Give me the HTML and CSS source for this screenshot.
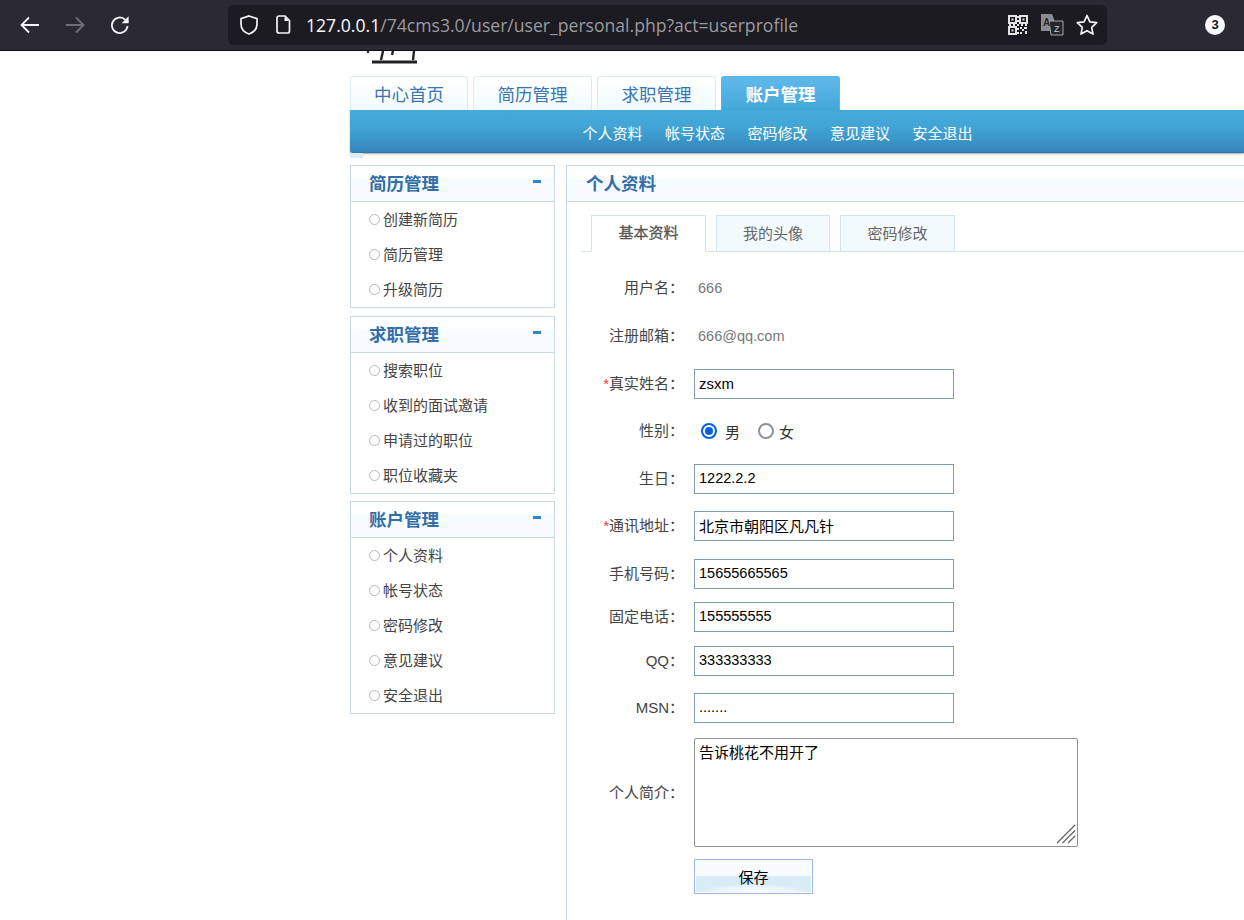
FILE: index.html
```html
<!DOCTYPE html>
<html lang="zh-CN">
<head>
    <meta charset="UTF-8">
    <title>个人资料</title>
    <link rel="stylesheet" href="styles.css">
</head>
<body>
    <div class="toolbar">
        <svg class="nav-icon" width="24" height="24" viewBox="0 0 24 24"><path d="M21 12H4M11 4.5 3.5 12l7.5 7.5" fill="none" stroke="#f4f4f6" stroke-width="1.8"/></svg>
        <svg class="nav-icon off" width="24" height="24" viewBox="0 0 24 24"><path d="M3 12h17M13 4.5l7.5 7.5-7.5 7.5" fill="none" stroke="#6f6e76" stroke-width="1.8"/></svg>
        <svg class="nav-icon" width="24" height="24" viewBox="0 0 24 24"><path d="M19.5 13a7.8 7.8 0 1 1-2.3-6.3L20 9" fill="none" stroke="#f4f4f6" stroke-width="1.8"/><path d="M20.6 3.2v7h-7z" fill="#f4f4f6"/></svg>
        <div class="urlbar">
            <svg width="20" height="22" viewBox="0 0 20 22"><path d="M10 2 18 4.6V10c0 5-3.4 8.400-8 10-4.600-1.600-8-5-8-10V4.600z" fill="none" stroke="#f4f4f6" stroke-width="1.700"/></svg>
            <svg class="page-icon" width="16" height="20" viewBox="0 0 16 20"><path d="M2 3a2 2 0 0 1 2-2h6l4.500 4.500V16a2 2 0 0 1-2 2H4a2 2 0 0 1-2-2z" fill="none" stroke="#f4f4f6" stroke-width="1.700"/><path d="M9.500 1.500v4.500h4.500z" fill="#f4f4f6"/></svg>
            <span class="url"><b>127.0.0.1</b>/74cms3.0/user/user_personal.php?act=userprofile</span>
            <svg class="qr" width="20" height="20" viewBox="0 0 20 20">
                <path d="M1 1h7v7H1zM12 1h7v7h-7zM1 12h7v7H1z" fill="none" stroke="#e4e4e4" stroke-width="2"/>
                <path d="M3.500 3.500h2v2h-2zM14.500 3.500h2v2h-2zM3.500 14.500h2v2h-2zM9 1h2v2H9zM9 5h2v2H9zM1 9h2v2H1zM5 9h2v2H5zM9 9h2v2H9zM13 9h2v2h-2zM17 9h2v2h-2zM9 13h2v2H9zM12 12h2v2h-2zM16 12h3v2h-3zM14 14h2v2h-2zM9 17h2v2H9zM12 17h2v2h-2zM17 16h2v3h-2z" fill="#e4e4e4"/>
            </svg>
            <svg class="translate" width="24" height="24" viewBox="0 0 24 24">
                <path d="M1 1h11l2 5v12H1z" fill="#8b8b8f"/>
                <path d="M9 8h14v14H11z" fill="#26252b" stroke="#a5a5a8"/>
                <text x="3" y="13" class="translate-a">A</text>
                <text x="14" y="19" class="translate-z">Z</text>
            </svg>
            <svg width="24" height="24" viewBox="0 0 24 24"><path d="M12 2.500l2.900 6.300 6.800.8-5 4.700 1.300 6.800-6-3.400-6 3.400 1.300-6.800-5-4.700 6.800-.8z" fill="none" stroke="#f4f4f6" stroke-width="1.700" stroke-linejoin="round"/></svg>
        </div>
        <span class="badge">3</span>
    </div>

    <div class="page">
        <div class="logo-row">
            <svg width="70" height="13" viewBox="0 0 70 13"><circle cx="18" cy="1" r="1.300" fill="#333"/><path d="M33 0l-2 9M43 0l-1 4M64 0l-1 9" fill="none" stroke="#222" stroke-width="2.400"/><path d="M22 11h45" fill="none" stroke="#222" stroke-width="3"/></svg>
        </div>

        <div class="nav-tabs">
            <a class="nav-tab">中心首页</a>
            <a class="nav-tab">简历管理</a>
            <a class="nav-tab">求职管理</a>
            <a class="nav-tab active">账户管理</a>
        </div>
        <div class="subnav">
            <a>个人资料</a>
            <a>帐号状态</a>
            <a>密码修改</a>
            <a>意见建议</a>
            <a>安全退出</a>
        </div>
        <div class="subnav-tail"></div>

        <div class="columns">
            <div class="sidebar">
                <div class="side-box">
                    <div class="side-title"><span>简历管理</span><i></i></div>
                    <ul>
                        <li>创建新简历</li>
                        <li>简历管理</li>
                        <li>升级简历</li>
                    </ul>
                </div>
                <div class="side-box">
                    <div class="side-title"><span>求职管理</span><i></i></div>
                    <ul>
                        <li>搜索职位</li>
                        <li>收到的面试邀请</li>
                        <li>申请过的职位</li>
                        <li>职位收藏夹</li>
                    </ul>
                </div>
                <div class="side-box">
                    <div class="side-title"><span>账户管理</span><i></i></div>
                    <ul>
                        <li>个人资料</li>
                        <li>帐号状态</li>
                        <li>密码修改</li>
                        <li>意见建议</li>
                        <li>安全退出</li>
                    </ul>
                </div>
            </div>

            <div class="main">
                <div class="main-title">个人资料</div>
                <div class="tabs">
                    <a class="tab current">基本资料</a>
                    <a class="tab">我的头像</a>
                    <a class="tab">密码修改</a>
                </div>
                <div class="form">
                    <div class="row gap18"><label>用户名：</label><span class="value">666</span></div>
                    <div class="row gap18"><label>注册邮箱：</label><span class="value">666@qq.com</span></div>
                    <div class="row gap17"><label><em>*</em>真实姓名：</label><input type="text" class="wide" value="zsxm"></div>
                    <div class="row gap18"><label>性别：</label>
                        <span class="radio on"></span><span class="radio-text">男</span>
                        <span class="radio"></span><span class="radio-text near">女</span>
                    </div>
                    <div class="row gap17"><label>生日：</label><input type="text" value="1222.2.2"></div>
                    <div class="row gap18"><label><em>*</em>通讯地址：</label><input type="text" class="wide" value="北京市朝阳区凡凡针"></div>
                    <div class="row gap13"><label>手机号码：</label><input type="text" value="15655665565"></div>
                    <div class="row gap14"><label>固定电话：</label><input type="text" value="155555555"></div>
                    <div class="row gap17"><label>QQ：</label><input type="text" value="333333333"></div>
                    <div class="row gap15"><label>MSN：</label><input type="text" value="......."></div>
                    <div class="row area">
                        <label>个人简介：</label>
                        <div class="area-box">
                            <textarea>告诉桃花不用开了</textarea>
                            <svg class="grip" width="20" height="20" viewBox="0 0 20 20"><path d="M1 19 19 1M6.500 19 19 6.500M12 19l7-7" fill="none" stroke="#666" stroke-width="1.300"/></svg>
                        </div>
                    </div>
                    <div class="row save"><button type="button" class="save-btn">保存</button></div>
                </div>
            </div>
        </div>
    </div>
</body>
</html>
```

FILE: styles.css
```css
* {
    margin: 0;
    padding: 0;
    box-sizing: border-box;
}

html, body {
    height: 100%;
    overflow: hidden;
}

body {
    background-color: #fff;
    font-family: "Liberation Sans", "Noto Sans CJK SC", sans-serif;
    font-size: 14px;
    color: #444;
}

/* browser chrome */
.toolbar {
    height: 51px;
    background-color: #2b2a33;
    border-bottom: 1px solid #0c0c0d;
    display: flex;
    align-items: center;
    padding-left: 18px;
}

.nav-icon {
    margin-right: 21px;
    flex: none;
}

.urlbar {
    margin-left: 75px;
    width: 879px;
    height: 40px;
    background-color: #1c1b22;
    border-radius: 6px;
    display: flex;
    align-items: center;
    padding-left: 11px;
    padding-right: 8px;
    margin-top: -1px;
}

.page-icon {
    margin-left: 16px;
}

.url {
    margin-left: 15px;
    margin-top: 1px;
    flex: 1;
    font-family: "Open Sans", "Noto Sans", sans-serif;
    font-size: 17.600px;
    color: #9a9a9f;
    white-space: nowrap;
}

.url b {
    font-weight: normal;
    color: #fbfbfe;
}

.qr {
    margin-right: 12px;
}

.translate {
    margin-right: 11px;
}

.translate-a {
    font-family: "Liberation Sans", sans-serif;
    font-size: 10px;
    font-weight: bold;
    fill: #26252b;
}

.translate-z {
    font-family: "Liberation Sans", sans-serif;
    font-size: 9px;
    fill: #c8c8ca;
}

.badge {
    margin-left: 98px;
    width: 20px;
    height: 20px;
    border-radius: 50%;
    background-color: #fbfbfe;
    color: #15141a;
    font-size: 13px;
    font-weight: bold;
    text-align: center;
    line-height: 20px;
    margin-top: -1px;
}

/* page */
.page {
    margin-left: 350px;
    width: 894px;
    height: 869px;
    display: flex;
    flex-direction: column;
}

.logo-row {
    height: 25px;
    line-height: 0;
}

.nav-tabs {
    display: flex;
    gap: 5px;
    height: 34px;
}

.nav-tab {
    width: 119px;
    height: 34px;
    background: linear-gradient(#ffffff, #f1fbfe);
    border: 1px solid #dcecf4;
    border-bottom: none;
    border-radius: 3px 3px 0 0;
    font-size: 17.500px;
    line-height: 37px;
    text-align: center;
    color: #3a75b0;
}

.nav-tab:first-child {
    width: 118px;
}

.nav-tab.active {
    background: linear-gradient(#5fb9ea, #44a8da);
    border-color: #5cb4e4;
    color: #fff;
    font-weight: bold;
}

.subnav {
    height: 43px;
    background: linear-gradient(#45a9db 0%, #42a5d6 40%, #3486bb 100%);
    border-bottom: 1px solid #2b78ab;
    border-radius: 0 0 0 3px;
    box-shadow: 0 1px 2px rgba(0, 0, 0, 0.35);
    display: flex;
    justify-content: center;
    align-items: center;
    gap: 22.500px;
    padding-right: 39px;
    padding-top: 2px;
    color: #fff;
    font-size: 15px;
}

.subnav-tail {
    width: 13px;
    height: 5px;
    background-color: #dfe9f1;
}

.columns {
    flex: 1;
    display: flex;
    gap: 11px;
    padding-top: 7px;
    min-height: 0;
}

/* left column */
.sidebar {
    width: 205px;
    flex: none;
}

.side-box {
    border: 1px solid #c9d9e8;
    margin-bottom: 8px;
}

.side-box:nth-child(2) {
    margin-bottom: 7px;
}

.side-title {
    height: 36px;
    background: linear-gradient(#ffffff 0%, #fdfeff 36%, #f6fbff 36%, #f7fbff 100%);
    border-bottom: 1px solid #c9d9e8;
    padding: 0 13px 0 18px;
    display: flex;
    align-items: center;
    justify-content: space-between;
    color: #336ea8;
    font-size: 17.500px;
    font-weight: bold;
}

.side-title span {
    margin-top: -2px;
}

.side-title i {
    width: 8px;
    height: 3px;
    margin-top: -5px;
    background-color: #2a87c0;
}

.side-box ul {
    list-style: none;
}

.side-box li {
    height: 35px;
    padding-left: 32px;
    position: relative;
    line-height: 35px;
    color: #444;
    font-size: 15px;
}

.side-box li::before {
    content: "";
    position: absolute;
    left: 18px;
    top: 12px;
    width: 9px;
    height: 9px;
    border-radius: 50%;
    border: 1px solid #b8b8b8;
    background-color: #fff;
}

/* right column */
.main {
    flex: 1;
    border-left: 1px solid #c9d9e8;
    min-width: 0;
}

.main-title {
    height: 37px;
    border-top: 1px solid #c9d9e8;
    border-bottom: 1px solid #c9d9e8;
    background: linear-gradient(#ffffff 0%, #fdfeff 36%, #f6fbff 36%, #f7fbff 100%);
    padding-left: 19px;
    line-height: 37px;
    color: #336ea8;
    font-size: 17.500px;
    font-weight: bold;
}

.tabs {
    display: flex;
    gap: 10px;
    margin: 13px 0 0 14px;
    height: 37px;
    border-bottom: 1px solid #d5e3ee;
}

.tab {
    width: 115px;
    height: 37px;
    background-color: #f3fafe;
    border: 1px solid #cfe3f0;
    text-align: center;
    line-height: 36px;
    color: #666;
    font-size: 15px;
}

.tab:first-child {
    margin-left: 10px;
}

.tab:nth-child(2) {
    width: 114px;
}

.tab.current {
    background-color: #fff;
    border-bottom-color: #fff;
    color: #555;
    line-height: 33px;
    -webkit-text-stroke: 0.3px #555;
}

.form {
    padding-top: 21px;
}

.row {
    display: flex;
    align-items: center;
    height: 30px;
}

.gap13 {
    margin-bottom: 13px;
}

.gap14 {
    margin-bottom: 14px;
}

.gap15 {
    margin-bottom: 15px;
}

.gap17 {
    margin-bottom: 17px;
}

.gap18 {
    margin-bottom: 18px;
}

.row label {
    width: 117px;
    margin-right: 10px;
    margin-top: -3px;
    text-align: right;
    color: #444;
    font-size: 15px;
    flex: none;
}

.row em {
    font-style: normal;
    color: #f33;
}

.value {
    margin-left: 4px;
    color: #777;
    font-size: 14.500px;
}

.row input {
    width: 260px;
    height: 30px;
    border: 1px solid #7f9db9;
    padding: 0 0 2px 4px;
    font-family: "Liberation Sans", "Noto Sans CJK SC", sans-serif;
    font-size: 14.500px;
    color: #000;
    outline: none;
}

.row input.wide {
    font-size: 15px;
}

.radio {
    width: 16px;
    height: 16px;
    margin-left: 7px;
    margin-right: 8px;
    border-radius: 50%;
    border: 2px solid #8f8f9d;
    background-color: #fff;
}

.radio.on {
    border-color: #0060df;
    position: relative;
}

.radio.on::after {
    content: "";
    position: absolute;
    left: 2px;
    top: 2px;
    width: 8px;
    height: 8px;
    border-radius: 50%;
    background-color: #0060df;
}

.radio-text {
    font-size: 15px;
    color: #333;
    margin-right: 11px;
}

.radio-text.near {
    margin-left: -3px;
}

.row.area {
    height: 109px;
    margin-bottom: 12px;
}

.area-box {
    position: relative;
    line-height: 0;
}

.row textarea {
    width: 384px;
    height: 109px;
    border: 1px solid #8f8f9d;
    border-radius: 2px;
    padding: 4px;
    font-family: "Liberation Sans", "Noto Sans CJK SC", sans-serif;
    font-size: 15px;
    line-height: 1.300;
    color: #000;
    outline: none;
    resize: none;
}

.grip {
    position: absolute;
    right: 2px;
    bottom: 3px;
}

.row.save {
    height: 35px;
    padding-left: 127px;
}

.save-btn {
    width: 119px;
    height: 35px;
    border: 1px solid #9ab6e2;
    background: radial-gradient(ellipse 50% 60% at 50% 100%, #fafdff 0%, #eaf4fb 70%, rgba(216, 235, 246, 0) 100%) 0 100% / 100% 50% no-repeat, linear-gradient(#f6fcff 0%, #f6fcff 50%, #d8ebf6 50%, #d8ebf6 100%);
    box-shadow: inset 0 0 0 1px #fff;
    font-family: "Liberation Sans", "Noto Sans CJK SC", sans-serif;
    font-size: 15px;
    color: #000;
}
```
